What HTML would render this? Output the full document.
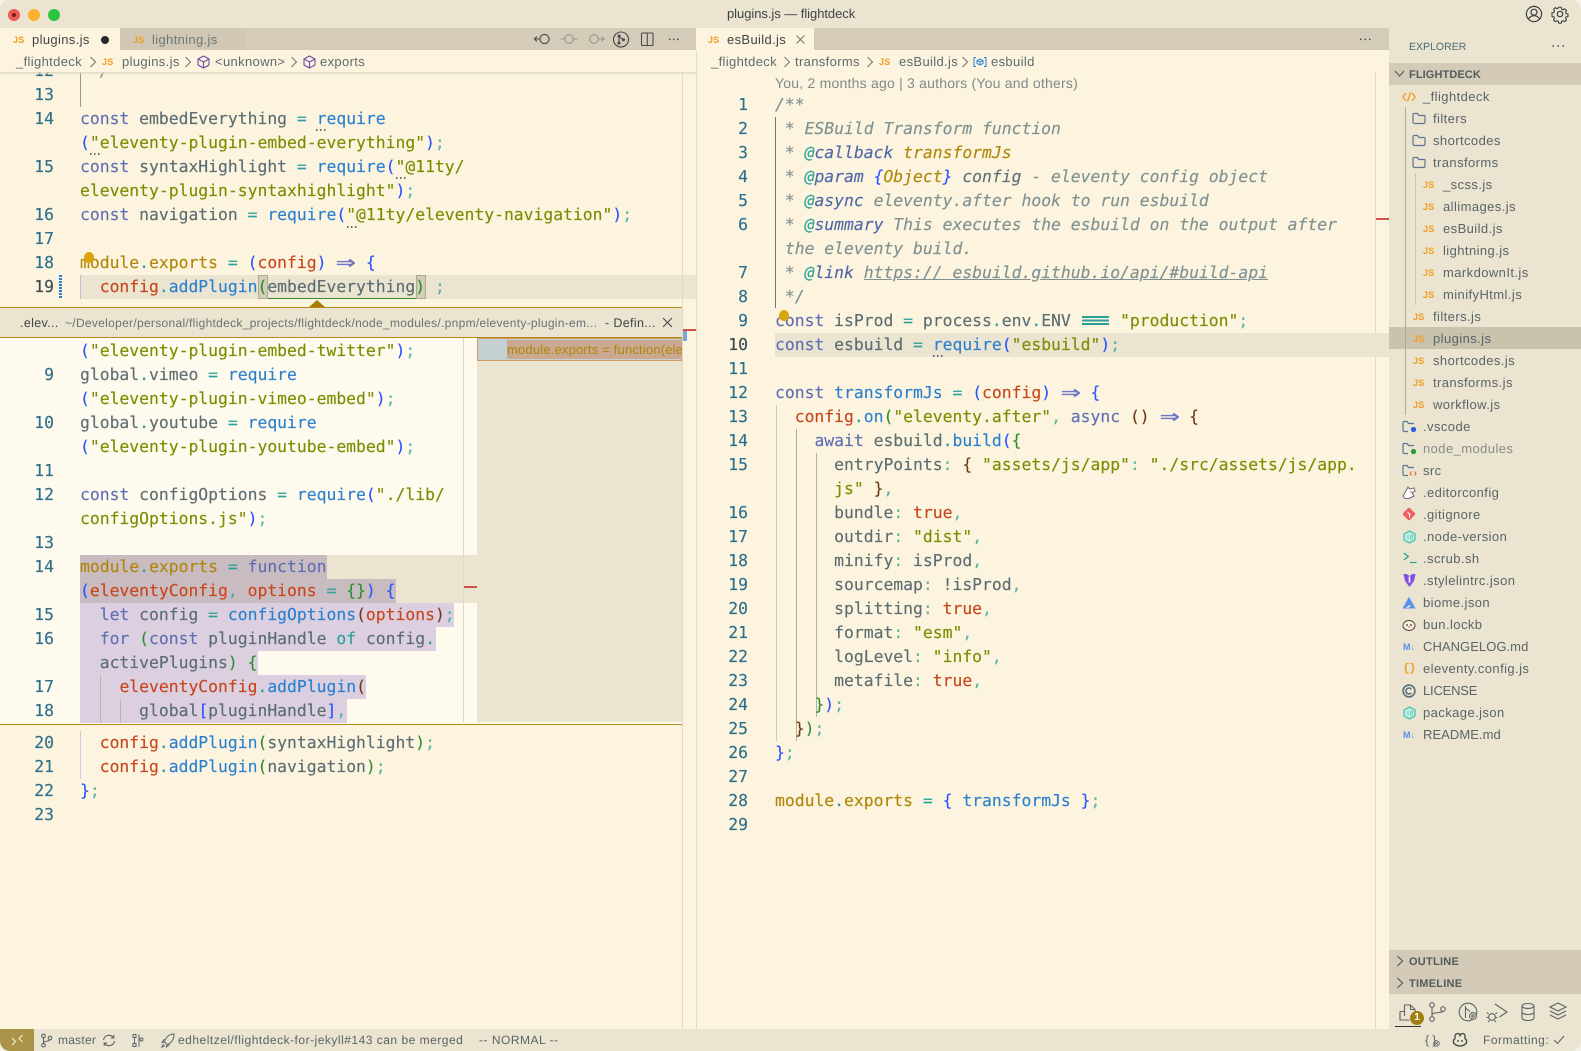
<!DOCTYPE html>
<html lang="en"><head><meta charset="utf-8"><title>plugins.js — flightdeck</title>
<style>
*{box-sizing:border-box}
html,body{margin:0;padding:0;width:1581px;height:1051px;overflow:hidden;background:#f3f0e6}
body{font-family:"Liberation Sans",sans-serif;position:relative}
#w{position:absolute;inset:0;background:#fcf4df;border-radius:10px;overflow:hidden}
.a{position:absolute}
.u{position:absolute;white-space:pre;font-size:13px;letter-spacing:.35px;line-height:22px;height:22px;margin-top:1px;text-rendering:geometricPrecision}
.c,.n{position:absolute;white-space:pre;font:16.39px/24px "DejaVu Sans Mono",monospace;height:24px;margin-top:1px;text-rendering:geometricPrecision;font-variant-ligatures:none;-webkit-text-stroke:.15px}
.c{color:#5b6c72}
.n{text-align:right;width:40px;color:#2e6f8c}
.js{position:absolute;font:bold 9px/12px "Liberation Sans",sans-serif;color:#f29d1f;letter-spacing:.2px;margin-top:1px}
.k{color:#5f6eb3}.v{color:#5b6c72}.o{color:#2aa198}.f{color:#2a80cf}.s{color:#7c8c00}.b{color:#2a55ff}.g{color:#2f8f30}.r{color:#c8451a}.y{color:#b0860a}.m{color:#6d3a1c}.p{color:#2aa198;opacity:.75}
.i{font-style:italic;color:#7f9192}.t{font-style:italic;color:#5f7076}.at{font-style:italic;color:#2aa198}.d{font-style:italic;color:#4f68a8}.ty{font-style:italic;color:#b0860a}.bi{font-style:italic;color:#2a55ff}
.ar{display:inline-block;width:1ch;margin-right:1ch;transform:scale(2,1.45);transform-origin:0 58%;color:#6a72c4;-webkit-text-stroke:.25px #6a72c4}
.eq{display:inline-block;width:calc(3ch - 2px);margin:0 1px;height:9px;color:transparent;background:repeating-linear-gradient(#2aa198 0 2px,transparent 2px 3.5px);line-height:9px;vertical-align:1px;overflow:hidden;-webkit-text-stroke:0}
.dots{position:absolute;width:10px;height:2px;background:repeating-linear-gradient(90deg,#5b6c72 0 1.6px,transparent 1.6px 4px)}
.bc{color:#5e6a6e}
svg{position:absolute;overflow:visible}
.row{color:#5b6468;letter-spacing:.42px}
#side svg,#crumb svg{margin-top:1px}
.st{letter-spacing:.5px;font-size:12px;color:#5b6468;margin-top:0}
</style></head><body><div id="w">

<!-- title bar -->
<div class="a" style="left:0;top:0;width:1581px;height:28px;background:#eae4d0"></div>
<div class="a" style="left:8px;top:9px;width:12px;height:12px;border-radius:50%;background:#ee5a52"></div>
<div class="a" style="left:12px;top:13px;width:4px;height:4px;border-radius:50%;background:#7d1c14"></div>
<div class="a" style="left:28px;top:9px;width:12px;height:12px;border-radius:50%;background:#fdb22e"></div>
<div class="a" style="left:48px;top:9px;width:12px;height:12px;border-radius:50%;background:#2bc640"></div>
<div class="u" style="left:727px;top:2px;color:#3f4547;letter-spacing:-.05px">plugins.js — flightdeck</div>
<svg style="left:1525px;top:5px" width="18" height="18" viewBox="0 0 18 18" fill="none" stroke="#3c3f40" stroke-width="1.2"><circle cx="9" cy="9" r="7.6"/><circle cx="9" cy="7.2" r="3"/><path d="M3.6 14.2c1-2.6 3-3.5 5.4-3.5s4.400.9 5.400 3.500"/></svg>
<svg style="left:1551px;top:5px" width="18" height="18" viewBox="0 0 18 18" fill="none" stroke="#3c3f40" stroke-width="1.2"><path d="M7.600 1.500h2.800l.4 2.100 1.500.7 1.900-1.100 2 2-1.100 1.900.7 1.500 2.100.4v2.800l-2.100.4-.7 1.500 1.100 1.900-2 2-1.900-1.100-1.500.7-.4 2.100H7.600l-.4-2.100-1.500-.7-1.900 1.100-2-2 1.100-1.900-.7-1.500-2.100-.4V7.700l2.100-.4.7-1.500-1.100-1.900 2-2 1.900 1.100 1.500-.7z" transform="translate(.9 .9) scale(.9)"/><circle cx="9" cy="9" r="2.700"/></svg>

<!-- left tabs -->
<div class="a" style="left:0;top:28px;width:696px;height:22px;background:#d4ccb9"></div>
<div class="a" style="left:120px;top:28px;width:126px;height:22px;background:#d0c8b4"></div>
<div class="a" style="left:0;top:28px;width:120px;height:22px;background:#fcf4df"></div>
<div class="js" style="left:13px;top:33px">JS</div>
<div class="u" style="left:32px;top:28px;color:#3f4547">plugins.js</div>
<div class="a" style="left:101px;top:36px;width:8px;height:8px;border-radius:50%;background:#26292a"></div>
<div class="js" style="left:133px;top:33px">JS</div>
<div class="u" style="left:152px;top:28px;color:#6c7678">lightning.js</div>
<svg style="left:534px;top:30px" width="160" height="18" viewBox="0 0 160 18" fill="none" stroke="#454a4b" stroke-width="1.100">
<circle cx="10.500" cy="9" r="4.600"/><path d="M5.900 9H.500M3 6.500.500 9 3 11.500"/>
<g stroke="#97968a"><circle cx="35" cy="9" r="4.300"/><path d="M26.500 9h4.200M39.300 9h4.200"/><circle cx="60" cy="9" r="4.300"/><path d="M64.300 9h5.500M67.500 6.500 70 9l-2.500 2.500"/></g>
<circle cx="87" cy="9.500" r="7.500"/><path d="M85 5v9M85 6.500l3.500 2.800"/><circle cx="85" cy="6" r="1" fill="#454a4b"/><circle cx="85" cy="13" r="1" fill="#454a4b"/><circle cx="89.500" cy="9.800" r="1" fill="#454a4b"/>
<rect x="107.500" y="3" width="11.500" height="12.500" rx="1"/><path d="M113.300 3v12.500"/>
<path d="M135 9.400h1.500M139 9.400h1.500M143 9.400h1.500" stroke-width="1.500"/></svg>

<!-- right tabs -->
<div class="a" style="left:696px;top:28px;width:693px;height:22px;background:#d4ccb9"></div>
<div class="a" style="left:696px;top:28px;width:118px;height:22px;background:#fcf4df"></div>
<div class="js" style="left:708px;top:33px">JS</div>
<div class="u" style="left:727px;top:28px;color:#3f4547">esBuild.js</div>
<svg style="left:795px;top:34px" width="12" height="12" fill="none" stroke="#6f7475" stroke-width="1"><path d="M1.500 1.500l8 8M9.500 1.500l-8 8"/></svg>
<svg style="left:1359px;top:30px" width="20" height="18" fill="none" stroke="#454a4b" stroke-width="1.500"><path d="M1 9.400h1.500M5.500 9.400H7M10 9.400h1.500"/></svg>

<!-- breadcrumbs -->
<div class="a" style="left:0;top:50px;width:696px;height:22px;background:#fcf4df"></div>
<div id="crumb">
<div class="u bc" style="left:16px;top:50px">_flightdeck</div>
<svg style="left:89px;top:55px" width="8" height="12" fill="none" stroke="#6f7475"><path d="M1.500 1l5 5-5 5"/></svg>
<div class="js" style="left:102px;top:55px">JS</div>
<div class="u bc" style="left:122px;top:50px">plugins.js</div>
<svg style="left:184px;top:55px" width="8" height="12" fill="none" stroke="#6f7475"><path d="M1.500 1l5 5-5 5"/></svg>
<svg style="left:197px;top:54px" width="13" height="14" fill="none" stroke="#6a4fa3" stroke-width="1.100"><path d="M6.500 1l5.500 3v6l-5.500 3L1 10V4zM1 4l5.500 3L12 4M6.500 7v6"/></svg>
<div class="u bc" style="left:215px;top:50px">&lt;unknown&gt;</div>
<svg style="left:290px;top:55px" width="8" height="12" fill="none" stroke="#6f7475"><path d="M1.500 1l5 5-5 5"/></svg>
<svg style="left:303px;top:54px" width="13" height="14" fill="none" stroke="#6a4fa3" stroke-width="1.100"><path d="M6.500 1l5.500 3v6l-5.500 3L1 10V4zM1 4l5.500 3L12 4M6.500 7v6"/></svg>
<div class="u bc" style="left:320px;top:50px">exports</div>

<div class="u bc" style="left:711px;top:50px">_flightdeck</div>
<svg style="left:783px;top:55px" width="8" height="12" fill="none" stroke="#6f7475"><path d="M1.500 1l5 5-5 5"/></svg>
<div class="u bc" style="left:795px;top:50px">transforms</div>
<svg style="left:866px;top:55px" width="8" height="12" fill="none" stroke="#6f7475"><path d="M1.500 1l5 5-5 5"/></svg>
<div class="js" style="left:879px;top:55px">JS</div>
<div class="u bc" style="left:899px;top:50px">esBuild.js</div>
<svg style="left:961px;top:55px" width="8" height="12" fill="none" stroke="#6f7475"><path d="M1.500 1l5 5-5 5"/></svg>
<svg style="left:973px;top:55px" width="14" height="12" fill="none" stroke="#2a80cf" stroke-width="1"><path d="M3 1.500H1v9h2M11 1.500h2v9h-2"/><path d="M7 3l3 1.500v3L7 9 4 7.500v-3zM4 4.500l3 1.500 3-1.500M7 6v3"/></svg>
<div class="u bc" style="left:991px;top:50px">esbuild</div>
</div>

<!-- left editor top -->
<div class="a" id="le" style="left:0;top:72px;width:696px;height:235px;overflow:hidden">
 <div class="a" style="left:80px;top:0;width:1px;height:35px;background:#9a9a8c"></div>
 <div class="n" style="left:14px;top:-14px">12</div><div class="c i" style="left:80px;top:-14px"> */</div>
 <div class="n" style="left:14px;top:10px">13</div>
 <div class="n" style="left:14px;top:34px">14</div><div class="c" style="left:80px;top:34px"><span class="k">const</span> embedEverything <span class="o">=</span> <span class="f">require</span></div>
 <div class="c" style="left:80px;top:58px"><span class="b">(</span><span class="s">"eleventy-plugin-embed-everything"</span><span class="b">)</span><span class="p">;</span></div>
 <div class="n" style="left:14px;top:82px">15</div><div class="c" style="left:80px;top:82px"><span class="k">const</span> syntaxHighlight <span class="o">=</span> <span class="f">require</span><span class="b">(</span><span class="s">"@11ty/</span></div>
 <div class="c" style="left:80px;top:106px"><span class="s">eleventy-plugin-syntaxhighlight"</span><span class="b">)</span><span class="p">;</span></div>
 <div class="n" style="left:14px;top:130px">16</div><div class="c" style="left:80px;top:130px"><span class="k">const</span> navigation <span class="o">=</span> <span class="f">require</span><span class="b">(</span><span class="s">"@11ty/eleventy-navigation"</span><span class="b">)</span><span class="p">;</span></div>
 <div class="n" style="left:14px;top:154px">17</div>
 <div class="n" style="left:14px;top:178px">18</div><div class="c" style="left:80px;top:178px"><span class="y">module</span><span class="o">.</span><span class="y">exports</span> <span class="o">=</span> <span class="b">(</span><span class="r">config</span><span class="b">)</span> <span class="ar">⇒</span> <span class="b">{</span></div>
 <div class="a" style="left:80px;top:203px;width:616px;height:24px;background:#eae4d0"></div>
 <div class="a" style="left:59px;top:203px;width:3px;height:23px;background:repeating-linear-gradient(#2a80cf 0 2px,#fcf4df 2px 3px)"></div>
 <div class="a" style="left:80px;top:203px;width:1px;height:24px;background:#b6c2d6"></div>
 <div class="a" style="left:258px;top:203px;width:10px;height:24px;background:#d2cfb6;border:1px solid #aaa99a"></div>
 <div class="a" style="left:416px;top:203px;width:10px;height:24px;background:#d2cfb6;border:1px solid #aaa99a"></div>
 <div class="a" style="left:268px;top:226px;width:148px;height:1px;background:#2f8f30"></div>
 <div class="n" style="left:14px;top:202px;color:#3c4a50">19</div><div class="c" style="left:80px;top:202px">  <span class="r">config</span><span class="o">.</span><span class="f">addPlugin</span><span class="g">(</span>embedEverything<span class="g">)</span> <span class="p">;</span></div>
</div>
<div class="dots" style="left:316px;top:129px"></div>
<div class="dots" style="left:90px;top:153px"></div>
<div class="dots" style="left:396px;top:177px"></div>
<div class="dots" style="left:347px;top:226px"></div>
<div class="a" style="left:84px;top:252px;width:10px;height:11px;border-radius:50% 50% 45% 45%;background:#d9a50f"></div>
<div class="a" style="left:0;top:72px;width:696px;height:3px;background:linear-gradient(#ddd7c3,rgba(221,215,195,0))"></div>

<!-- rulers of left pane -->
<div class="a" style="left:682px;top:72px;width:1px;height:957px;background:#dfd9c6"></div>
<div class="a" style="left:696px;top:50px;width:1px;height:979px;background:#e4decb"></div>
<div class="a" style="left:683px;top:329px;width:13px;height:2px;background:#d0524a"></div>
<div class="a" style="left:683px;top:331px;width:4px;height:10px;background:#7aa7d2"></div>

<!-- peek widget -->
<div class="a" style="left:309px;top:300px;width:0;height:0;border-left:8px solid transparent;border-right:8px solid transparent;border-bottom:7px solid #a87c00"></div>
<div class="a" style="left:0;top:307px;width:682px;height:31px;background:#eae4d0;border-top:1px solid #b5891a;border-bottom:1px solid #b5891a"></div>
<div class="u" style="left:20px;top:311px;color:#3f4547;font-size:12.500px">.elev...</div>
<div class="u" style="left:65px;top:311px;color:#6a7274;font-size:12px;letter-spacing:.3px">~/Developer/personal/flightdeck_projects/flightdeck/node_modules/.pnpm/eleventy-plugin-em...</div>
<div class="u" style="left:605px;top:311px;color:#3f4547;font-size:12.500px">- Defin...</div>
<svg style="left:662px;top:317px" width="11" height="11" fill="none" stroke="#454a4b" stroke-width="1.100"><path d="M1 1l9 9M10 1l-9 9"/></svg>

<div class="a" id="pk" style="left:0;top:338px;width:682px;height:387px;background:#fffaee;overflow:hidden;border-bottom:1px solid #b5891a">
 <div class="a" style="left:80px;top:217px;width:397px;height:48px;background:#eae4d0"></div>
 <div class="a" style="left:80px;top:217px;width:247px;height:24px;background:#c9bcc0"></div>
 <div class="a" style="left:80px;top:241px;width:316px;height:24px;background:#c9bcc0"></div>
 <div class="a" style="left:80px;top:265px;width:374px;height:24px;background:#dbcfe0"></div>
 <div class="a" style="left:80px;top:289px;width:356px;height:24px;background:#dbcfe0"></div>
 <div class="a" style="left:80px;top:313px;width:178px;height:24px;background:#dbcfe0"></div>
 <div class="a" style="left:80px;top:337px;width:286px;height:24px;background:#dbcfe0"></div>
 <div class="a" style="left:80px;top:361px;width:267px;height:24px;background:#dbcfe0"></div>
 <div class="a" style="left:100px;top:337px;width:1px;height:48px;background:#c0aeb8"></div>
 <div class="a" style="left:120px;top:361px;width:1px;height:24px;background:#c0aeb8"></div>
 <div class="a" style="left:463px;top:0;width:1px;height:384px;background:#ded9c8"></div>
 <div class="a" style="left:477px;top:0;width:205px;height:384px;background:#eae4d0"></div>
 <div class="a" style="left:477px;top:0;width:205px;height:23px;background:#c5d0d2;border:1px solid #cf9a62"></div>
 <div class="a" style="left:507px;top:2px;width:175px;height:19px;background:#cba890"></div>
 <div class="u" style="left:507px;top:0;font-size:13px;letter-spacing:.18px;color:#b0860a;width:175px;overflow:hidden">module.exports = function(eleventyConfig</div>
 <div class="a" style="left:464px;top:248px;width:13px;height:2px;background:#d0524a"></div>

 <div class="c" style="left:80px;top:0"><span class="b">(</span><span class="s">"eleventy-plugin-embed-twitter"</span><span class="b">)</span><span class="p">;</span></div>
 <div class="n" style="left:14px;top:24px">9</div><div class="c" style="left:80px;top:24px">global<span class="o">.</span>vimeo <span class="o">=</span> <span class="f">require</span></div>
 <div class="c" style="left:80px;top:48px"><span class="b">(</span><span class="s">"eleventy-plugin-vimeo-embed"</span><span class="b">)</span><span class="p">;</span></div>
 <div class="n" style="left:14px;top:72px">10</div><div class="c" style="left:80px;top:72px">global<span class="o">.</span>youtube <span class="o">=</span> <span class="f">require</span></div>
 <div class="c" style="left:80px;top:96px"><span class="b">(</span><span class="s">"eleventy-plugin-youtube-embed"</span><span class="b">)</span><span class="p">;</span></div>
 <div class="n" style="left:14px;top:120px">11</div>
 <div class="n" style="left:14px;top:144px">12</div><div class="c" style="left:80px;top:144px"><span class="k">const</span> configOptions <span class="o">=</span> <span class="f">require</span><span class="b">(</span><span class="s">"./lib/</span></div>
 <div class="c" style="left:80px;top:168px"><span class="s">configOptions.js"</span><span class="b">)</span><span class="p">;</span></div>
 <div class="n" style="left:14px;top:192px">13</div>
 <div class="n" style="left:14px;top:216px">14</div><div class="c" style="left:80px;top:216px"><span class="y">module</span><span class="o">.</span><span class="y">exports</span> <span class="o">=</span> <span class="k">function</span></div>
 <div class="c" style="left:80px;top:240px"><span class="b">(</span><span class="r">eleventyConfig</span><span class="p">,</span> <span class="r">options</span> <span class="o">=</span> <span class="g">{}</span><span class="b">)</span> <span class="b">{</span></div>
 <div class="n" style="left:14px;top:264px">15</div><div class="c" style="left:80px;top:264px">  <span class="k">let</span> config <span class="o">=</span> <span class="f">configOptions</span><span class="m">(</span><span class="r">options</span><span class="m">)</span><span class="p">;</span></div>
 <div class="n" style="left:14px;top:288px">16</div><div class="c" style="left:80px;top:288px">  <span class="k">for</span> <span class="g">(</span><span class="k">const</span> pluginHandle <span class="o">of</span> config<span class="o">.</span></div>
 <div class="c" style="left:80px;top:312px">  activePlugins<span class="g">) {</span></div>
 <div class="n" style="left:14px;top:336px">17</div><div class="c" style="left:80px;top:336px">    <span class="r">eleventyConfig</span><span class="o">.</span><span class="f">addPlugin</span><span class="m">(</span></div>
 <div class="n" style="left:14px;top:360px">18</div><div class="c" style="left:80px;top:360px">      global<span class="b">[</span>pluginHandle<span class="b">]</span><span class="p">,</span></div>
</div>

<!-- left editor bottom -->
<div class="a" style="left:80px;top:731px;width:1px;height:48px;background:#c5cfdf"></div>
<div class="n" style="left:14px;top:730px">20</div><div class="c" style="left:80px;top:730px">  <span class="r">config</span><span class="o">.</span><span class="f">addPlugin</span><span class="g">(</span>syntaxHighlight<span class="g">)</span><span class="p">;</span></div>
<div class="n" style="left:14px;top:754px">21</div><div class="c" style="left:80px;top:754px">  <span class="r">config</span><span class="o">.</span><span class="f">addPlugin</span><span class="g">(</span>navigation<span class="g">)</span><span class="p">;</span></div>
<div class="n" style="left:14px;top:778px">22</div><div class="c" style="left:80px;top:778px"><span class="b">}</span><span class="p">;</span></div>
<div class="n" style="left:14px;top:802px">23</div>

<!-- right editor -->
<div class="a" style="left:1375px;top:72px;width:1px;height:957px;background:#dfd9c6"></div>
<div class="a" style="left:775px;top:333px;width:614px;height:24px;background:#eae4d0"></div>
<div class="a" style="left:1376px;top:218px;width:13px;height:2px;background:#d0524a"></div>
<div class="a" style="left:775px;top:117px;width:1px;height:191px;background:#76766a"></div>
<div class="a" style="left:775.500px;top:405px;width:1px;height:336px;background:#c5c8d8"></div>
<div class="a" style="left:795.500px;top:429px;width:1px;height:312px;background:#b3ae90"></div>
<div class="a" style="left:815.500px;top:453px;width:1px;height:264px;background:#a8b8a8"></div>
<div class="u" style="left:775px;top:71px;font-size:14px;letter-spacing:.22px;color:#7f8a8a">You, 2 months ago | 3 authors (You and others)</div>

<div class="n" style="left:708px;top:92px">1</div><div class="c i" style="left:775px;top:92px">/**</div>
<div class="n" style="left:708px;top:116px">2</div><div class="c i" style="left:775px;top:116px"> * ESBuild Transform function</div>
<div class="n" style="left:708px;top:140px">3</div><div class="c i" style="left:775px;top:140px"> * <span class="at">@</span><span class="d">callback</span> <span class="ty">transformJs</span></div>
<div class="n" style="left:708px;top:164px">4</div><div class="c i" style="left:775px;top:164px"> * <span class="at">@</span><span class="d">param</span> <span class="bi">{</span><span class="ty">Object</span><span class="bi">}</span> <span class="t">config</span> - eleventy config object</div>
<div class="n" style="left:708px;top:188px">5</div><div class="c i" style="left:775px;top:188px"> * <span class="at">@</span><span class="d">async</span> eleventy.after hook to run esbuild</div>
<div class="n" style="left:708px;top:212px">6</div><div class="c i" style="left:775px;top:212px"> * <span class="at">@</span><span class="d">summary</span> This executes the esbuild on the output after</div>
<div class="c i" style="left:775px;top:236px"> the eleventy build.</div>
<div class="n" style="left:708px;top:260px">7</div><div class="c i" style="left:775px;top:260px"> * <span class="at">@</span><span class="d">link</span> <span style="text-decoration:underline">https:// esbuild.github.io/api/#build-api</span></div>
<div class="n" style="left:708px;top:284px">8</div><div class="c i" style="left:775px;top:284px"> */</div>
<div class="n" style="left:708px;top:308px">9</div><div class="c" style="left:775px;top:308px"><span class="k">const</span> isProd <span class="o">=</span> process<span class="o">.</span>env<span class="o">.</span>ENV <span class="eq">===</span> <span class="s">"production"</span><span class="p">;</span></div>
<div class="n" style="left:708px;top:332px;color:#3c4a50">10</div><div class="c" style="left:775px;top:332px"><span class="k">const</span> esbuild <span class="o">=</span> <span class="f">require</span><span class="b">(</span><span class="s">"esbuild"</span><span class="b">)</span><span class="p">;</span></div>
<div class="n" style="left:708px;top:356px">11</div>
<div class="n" style="left:708px;top:380px">12</div><div class="c" style="left:775px;top:380px"><span class="k">const</span> <span class="f">transformJs</span> <span class="o">=</span> <span class="b">(</span><span class="r">config</span><span class="b">)</span> <span class="ar">⇒</span> <span class="b">{</span></div>
<div class="n" style="left:708px;top:404px">13</div><div class="c" style="left:775px;top:404px">  <span class="r">config</span><span class="o">.</span><span class="f">on</span><span class="g">(</span><span class="s">"eleventy.after"</span><span class="p">,</span> <span class="k">async</span> <span class="m">()</span> <span class="ar">⇒</span> <span class="m">{</span></div>
<div class="n" style="left:708px;top:428px">14</div><div class="c" style="left:775px;top:428px">    <span class="k">await</span> esbuild<span class="o">.</span><span class="f">build</span><span class="b">(</span><span class="g">{</span></div>
<div class="n" style="left:708px;top:452px">15</div><div class="c" style="left:775px;top:452px">      entryPoints<span class="p">:</span> <span class="m">{</span> <span class="s">"assets/js/app"</span><span class="p">:</span> <span class="s">"./src/assets/js/app.</span></div>
<div class="c" style="left:775px;top:476px">      <span class="s">js"</span> <span class="m">}</span><span class="p">,</span></div>
<div class="n" style="left:708px;top:500px">16</div><div class="c" style="left:775px;top:500px">      bundle<span class="p">:</span> <span class="r">true</span><span class="p">,</span></div>
<div class="n" style="left:708px;top:524px">17</div><div class="c" style="left:775px;top:524px">      outdir<span class="p">:</span> <span class="s">"dist"</span><span class="p">,</span></div>
<div class="n" style="left:708px;top:548px">18</div><div class="c" style="left:775px;top:548px">      minify<span class="p">:</span> isProd<span class="p">,</span></div>
<div class="n" style="left:708px;top:572px">19</div><div class="c" style="left:775px;top:572px">      sourcemap<span class="p">:</span> !isProd<span class="p">,</span></div>
<div class="n" style="left:708px;top:596px">20</div><div class="c" style="left:775px;top:596px">      splitting<span class="p">:</span> <span class="r">true</span><span class="p">,</span></div>
<div class="n" style="left:708px;top:620px">21</div><div class="c" style="left:775px;top:620px">      format<span class="p">:</span> <span class="s">"esm"</span><span class="p">,</span></div>
<div class="n" style="left:708px;top:644px">22</div><div class="c" style="left:775px;top:644px">      logLevel<span class="p">:</span> <span class="s">"info"</span><span class="p">,</span></div>
<div class="n" style="left:708px;top:668px">23</div><div class="c" style="left:775px;top:668px">      metafile<span class="p">:</span> <span class="r">true</span><span class="p">,</span></div>
<div class="n" style="left:708px;top:692px">24</div><div class="c" style="left:775px;top:692px">    <span class="g">}</span><span class="b">)</span><span class="p">;</span></div>
<div class="n" style="left:708px;top:716px">25</div><div class="c" style="left:775px;top:716px">  <span class="m">}</span><span class="g">)</span><span class="p">;</span></div>
<div class="n" style="left:708px;top:740px">26</div><div class="c" style="left:775px;top:740px"><span class="b">}</span><span class="p">;</span></div>
<div class="n" style="left:708px;top:764px">27</div>
<div class="n" style="left:708px;top:788px">28</div><div class="c" style="left:775px;top:788px"><span class="y">module</span><span class="o">.</span><span class="y">exports</span> <span class="o">=</span> <span class="b">{</span> <span class="f">transformJs</span> <span class="b">}</span><span class="p">;</span></div>
<div class="n" style="left:708px;top:812px">29</div>
<div class="dots" style="left:933px;top:355px"></div>
<div class="a" style="left:779px;top:310px;width:10px;height:11px;border-radius:50% 50% 45% 45%;background:#d9a50f"></div>

<!-- sidebar -->
<div class="a" style="left:1389px;top:28px;width:192px;height:1001px;background:#eae4d0"></div>
<div class="u" style="left:1409px;top:35px;font-size:10.500px;letter-spacing:.02px;color:#4e6a73">EXPLORER</div>
<svg style="left:1551px;top:37px" width="16" height="18" fill="none" stroke="#454a4b" stroke-width="1.500"><path d="M1.500 9h1.500M6.500 9H8M11.500 9H13"/></svg>
<div class="a" style="left:1389px;top:63px;width:192px;height:22px;background:#d3cbb8"></div>
<svg style="left:1394px;top:70px" width="11" height="8" fill="none" stroke="#555" stroke-width="1.100"><path d="M1 1l4.500 5L10 1"/></svg>
<div class="u" style="left:1409px;top:63px;font-size:11px;font-weight:bold;letter-spacing:.1px;color:#555b5c">FLIGHTDECK</div>
<div class="a" style="left:1389px;top:327px;width:192px;height:22px;background:#c9c2ac"></div>
<div class="a" style="left:1405px;top:107px;width:1px;height:308px;background:#aeaa9c"></div>
<div class="a" style="left:1415px;top:173px;width:1px;height:132px;background:#ccc6b2"></div>

<div id="side">
<svg style="left:1402px;top:90px" width="14" height="12" fill="none" stroke="#f29d1f" stroke-width="1.300"><path d="M4 2L.800 6 4 10M10 2l3.200 4L10 10M8.500 1.500l-3 9"/></svg>
<div class="u row" style="left:1423px;top:85px">_flightdeck</div>
<svg style="left:1412px;top:111px" width="14" height="13" fill="none" stroke="#5c7590" stroke-width="1.200"><path d="M1 2.500a1 1 0 011-1h3.500l1.500 2h5a1 1 0 011 1V10a1.500 1.500 0 01-1.500 1.500h-9A1.500 1.500 0 011 10z"/></svg>
<div class="u row" style="left:1433px;top:107px">filters</div>
<svg style="left:1412px;top:133px" width="14" height="13" fill="none" stroke="#5c7590" stroke-width="1.200"><path d="M1 2.500a1 1 0 011-1h3.500l1.500 2h5a1 1 0 011 1V10a1.500 1.500 0 01-1.500 1.500h-9A1.500 1.500 0 011 10z"/></svg>
<div class="u row" style="left:1433px;top:129px">shortcodes</div>
<svg style="left:1412px;top:155px" width="14" height="13" fill="none" stroke="#5c7590" stroke-width="1.200"><path d="M1 2.500a1 1 0 011-1h3.500l1.500 2h5a1 1 0 011 1V10a1.500 1.500 0 01-1.500 1.500h-9A1.500 1.500 0 011 10z"/></svg>
<div class="u row" style="left:1433px;top:151px">transforms</div>
<div class="js" style="left:1423px;top:178px">JS</div><div class="u row" style="left:1443px;top:173px">_scss.js</div>
<div class="js" style="left:1423px;top:200px">JS</div><div class="u row" style="left:1443px;top:195px">allimages.js</div>
<div class="js" style="left:1423px;top:222px">JS</div><div class="u row" style="left:1443px;top:217px">esBuild.js</div>
<div class="js" style="left:1423px;top:244px">JS</div><div class="u row" style="left:1443px;top:239px">lightning.js</div>
<div class="js" style="left:1423px;top:266px">JS</div><div class="u row" style="left:1443px;top:261px">markdownIt.js</div>
<div class="js" style="left:1423px;top:288px">JS</div><div class="u row" style="left:1443px;top:283px">minifyHtml.js</div>
<div class="js" style="left:1413px;top:310px">JS</div><div class="u row" style="left:1433px;top:305px">filters.js</div>
<div class="js" style="left:1413px;top:332px">JS</div><div class="u row" style="left:1433px;top:327px">plugins.js</div>
<div class="js" style="left:1413px;top:354px">JS</div><div class="u row" style="left:1433px;top:349px">shortcodes.js</div>
<div class="js" style="left:1413px;top:376px">JS</div><div class="u row" style="left:1433px;top:371px">transforms.js</div>
<div class="js" style="left:1413px;top:398px">JS</div><div class="u row" style="left:1433px;top:393px">workflow.js</div>

<svg style="left:1402px;top:419px" width="15" height="14" fill="none" stroke="#5c7590" stroke-width="1.200"><path d="M6 11.500H2.500A1.500 1.500 0 011 10V2.500a1 1 0 011-1h3l1.500 2H12"/><circle cx="11.500" cy="9.500" r="2.600" fill="#2a5fe0" stroke="none"/></svg>
<div class="u row" style="left:1423px;top:415px">.vscode</div>
<svg style="left:1402px;top:441px" width="15" height="14" fill="none" stroke="#5c7590" stroke-width="1.200"><path d="M6 11.500H2.500A1.500 1.500 0 011 10V2.500a1 1 0 011-1h3l1.500 2H12"/><circle cx="11.500" cy="9.500" r="2.600" fill="#2a9a40" stroke="none"/></svg>
<div class="u" style="left:1423px;top:437px;color:#878c88;letter-spacing:.42px">node_modules</div>
<svg style="left:1402px;top:463px" width="15" height="14" fill="none" stroke="#5c7590" stroke-width="1.200"><path d="M6 11.500H2.500A1.500 1.500 0 011 10V2.500a1 1 0 011-1h3l1.500 2H12"/><path d="M9.500 7.500 8 9.500l1.500 2M12.500 7.500l1.500 2-1.500 2" stroke="#e0562a" stroke-width="1"/></svg>
<div class="u row" style="left:1423px;top:459px">src</div>
<svg style="left:1402px;top:485px" width="14" height="14"><path d="M1 10l3-5 2-4 1.500 2L12 2l1 3-3 2 2 3-5 2.500H3z" fill="#fff" stroke="#6a6a72"/><circle cx="9" cy="6" r="1.300" fill="#e8b0b8"/></svg>
<div class="u row" style="left:1423px;top:481px">.editorconfig</div>
<svg style="left:1402px;top:506px" width="14" height="14"><rect x="2.200" y="2.200" width="9.600" height="9.600" rx="1.500" transform="rotate(45 7 7)" fill="#ee5e5e"/><path d="M5.500 5 8.500 8M7.500 7v3.500" stroke="#fff" stroke-width=".9" fill="none"/></svg>
<div class="u row" style="left:1423px;top:503px">.gitignore</div>
<svg style="left:1403px;top:529px" width="13" height="14" fill="#c3efe2" stroke="#4fc7ad" stroke-width="1.300"><path d="M6.500 1 12 4v6l-5.500 3L1 10V4z"/><path d="M5 5v4M7.500 5h2v2h-2v2h2" fill="none" stroke-width=".8"/></svg>
<div class="u row" style="left:1423px;top:525px">.node-version</div>
<svg style="left:1403px;top:551px" width="14" height="12" fill="none" stroke="#2aa198" stroke-width="1.300"><path d="M.800 1l4.500 3.500L.800 8M7 10.500h6.500"/></svg>
<div class="u row" style="left:1423px;top:547px">.scrub.sh</div>
<svg style="left:1403px;top:572px" width="13" height="14"><path d="M.500 1h3L6.500 3 9.500 1h3L11 8l-4.500 6L2 8z" fill="#8150e0"/><path d="M6.500 3.500v6" stroke="#fff" stroke-width="1.600"/></svg>
<div class="u row" style="left:1423px;top:569px">.stylelintrc.json</div>
<svg style="left:1402px;top:595px" width="14" height="14"><path d="M7 .800 13.500 12.500H.500z" fill="#5b8ff0"/><path d="M4 12l3-3 2 1-3 2z" fill="#eae4d0"/></svg>
<div class="u row" style="left:1423px;top:591px">biome.json</div>
<svg style="left:1402px;top:617px" width="14" height="14"><ellipse cx="7" cy="7.500" rx="6" ry="5" fill="#faeedd" stroke="#5a4a40" stroke-width="1"/><circle cx="5" cy="7" r=".9" fill="#333"/><circle cx="9" cy="7" r=".9" fill="#333"/><path d="M6 8.500h2v1H6z" fill="#d65"/></svg>
<div class="u row" style="left:1423px;top:613px">bun.lockb</div>
<div class="a" style="left:1403px;top:641px;font:bold 9px/12px 'Liberation Sans',sans-serif;color:#5b8ff0">M↓</div>
<div class="u row" style="left:1423px;top:635px;letter-spacing:.05px">CHANGELOG.md</div>
<div class="a" style="left:1403px;top:661px;font:bold 11px/16px 'Liberation Mono',monospace;color:#f29d1f;letter-spacing:-.5px">{}</div>
<div class="u row" style="left:1423px;top:657px">eleventy.config.js</div>
<svg style="left:1402px;top:683px" width="14" height="14" fill="none" stroke="#5a7180" stroke-width="1.600"><circle cx="7" cy="7" r="5.900"/><path d="M9.300 5.200a3 3 0 100 3.600"/></svg>
<div class="u row" style="left:1423px;top:679px;letter-spacing:-.2px">LICENSE</div>
<svg style="left:1403px;top:705px" width="13" height="14" fill="#c3efe2" stroke="#4fc7ad" stroke-width="1.300"><path d="M6.500 1 12 4v6l-5.500 3L1 10V4z"/><path d="M5 5v4M7.500 5h2v2h-2v2h2" fill="none" stroke-width=".8"/></svg>
<div class="u row" style="left:1423px;top:701px">package.json</div>
<div class="a" style="left:1403px;top:729px;font:bold 9px/12px 'Liberation Sans',sans-serif;color:#5b8ff0">M↓</div>
<div class="u row" style="left:1423px;top:723px;letter-spacing:.05px">README.md</div>
</div>

<div class="a" style="left:1389px;top:950px;width:192px;height:44px;background:#d3cbb8"></div>
<svg style="left:1396px;top:955px" width="8" height="12" fill="none" stroke="#555" stroke-width="1.100"><path d="M1.500 1l5 5-5 5"/></svg>
<svg style="left:1396px;top:977px" width="8" height="12" fill="none" stroke="#555" stroke-width="1.100"><path d="M1.500 1l5 5-5 5"/></svg>
<div class="u" style="left:1409px;top:950px;font-size:11px;font-weight:bold;letter-spacing:.25px;color:#555b5c">OUTLINE</div>
<div class="u" style="left:1409px;top:972px;font-size:11px;font-weight:bold;letter-spacing:.25px;color:#555b5c">TIMELINE</div>

<!-- activity bar -->
<svg style="left:1395px;top:998px" width="180" height="30" fill="none" stroke="#5b6468" stroke-width="1.100">
<path d="M5 13.500V22h9.500M5 13.500h4.500V7h6l4.500 4.500V16"/><path d="M15.500 7v4.500H20M9.500 13.500V18"/>
<path d="M0 28.500h26" stroke="#333" stroke-width="1"/>
<circle cx="37" cy="7" r="2.300"/><circle cx="37" cy="21" r="2.300"/><circle cx="48" cy="11" r="2.300"/><path d="M37 9.300v9.400M37 17c0-3 8.500-1.500 11-3.700"/>
<circle cx="73" cy="14" r="8.800"/><path d="M70.500 8v12M70.500 10l4.500 3.500"/><circle cx="78" cy="18" r="3.400" fill="#eae4d0"/><circle cx="78" cy="18" r="1.200"/>
<path d="M100 6l12 8-7.500 5"/><circle cx="97" cy="19" r="3.300"/><path d="M93.500 16l-1.500-1.500M100.500 16l1.500-1.500M93.500 19.500h-2M100.500 19.500h2M94.500 22.500l-1.500 1.500M99.500 22.500l1.500 1.500"/>
<ellipse cx="133" cy="8" rx="6" ry="2.500"/><path d="M127 8v12c0 1.400 2.700 2.500 6 2.500s6-1.100 6-2.500V8M127 14c0 1.400 2.700 2.500 6 2.500s6-1.100 6-2.500"/>
<path d="M163 5l8 4-8 4-8-4zM155 13l8 4 8-4M155 17l8 4 8-4"/></svg>
<div class="a" style="left:1410px;top:1011px;width:14px;height:14px;border-radius:50%;background:#a07f10;color:#fff;font:bold 10px/14px 'Liberation Sans',sans-serif;text-align:center">1</div>

<!-- status bar -->
<div class="a" style="left:0;top:1029px;width:1581px;height:22px;background:#eae4d0"></div>
<div class="a" style="left:0;top:1029px;width:34px;height:22px;background:#a89348"></div>
<svg style="left:11px;top:1034px" width="13" height="12" fill="none" stroke="#f7f1dc" stroke-width="1.100"><path d="M1 4l3.500 3.500L1 11M11.500 1 8 4.500 11.500 8"/></svg>
<svg style="left:40px;top:1033px" width="13" height="15" fill="none" stroke="#5b6468" stroke-width="1.100"><circle cx="3.500" cy="2.800" r="1.800"/><circle cx="3.500" cy="12.200" r="1.800"/><circle cx="10" cy="5" r="1.800"/><path d="M3.500 4.600v5.800M3.500 9.500C3.500 8 10 8.500 10 6.800"/></svg>
<div class="u st" style="left:58px;top:1029px;letter-spacing:.25px">master</div>
<svg style="left:102px;top:1034px" width="14" height="13" fill="none" stroke="#5b6468" stroke-width="1.100"><path d="M1.500 6a5.500 5.500 0 019.800-2.500M12.500 7a5.500 5.500 0 01-9.800 2.500M11.800 1v3h-3M2.200 12V9h3"/></svg>
<svg style="left:131px;top:1033px" width="13" height="15" fill="none" stroke="#5b6468" stroke-width="1"><path d="M2 1.500h3v3H2zM2 10.500h3v3H2zM3.500 4.500v6M8 1.500v12"/><circle cx="10.500" cy="6.500" r="1.500"/></svg>
<svg style="left:161px;top:1033px" width="14" height="15" fill="none" stroke="#5b6468" stroke-width="1"><path d="M13 1C8 1 4.500 4.500 3.500 9l2.500 2.500C10.500 10.500 13 6 13 1zM3.500 9 1 9.500 3.500 6M6 11.500 5.500 14l3-2.500M2.500 11l-1.500 3 3-1.500"/></svg>
<div class="u st" style="left:178px;top:1029px">edheltzel/flightdeck-for-jekyll#143 can be merged</div>
<div class="u st" style="left:479px;top:1029px">-- NORMAL --</div>
<div class="u st" style="left:1425px;top:1029px;letter-spacing:0">{ }</div>
<svg style="left:1433px;top:1040px" width="7" height="7" fill="none" stroke="#5b6468" stroke-width=".8"><circle cx="3.500" cy="3.500" r="2.800"/><path d="M2 2l3 3M5 2 2 5"/></svg>
<svg style="left:1452px;top:1032px" width="16" height="15" fill="none" stroke="#3f4547" stroke-width="1.300"><path d="M3 6.500V4c0-1.500 1.500-2.500 3-2.500S8 3 8 4.500C8 3 9 1.500 10.500 1.500S13 2.500 13 4v2.500l1.500 1.500v3c-2 2-4.500 3-6.500 3s-4.500-1-6.500-3V8z"/><path d="M6 8v2M10 8v2"/></svg>
<div class="u st" style="left:1483px;top:1029px">Formatting:</div>
<svg style="left:1553px;top:1035px" width="12" height="10" fill="none" stroke="#5b6468" stroke-width="1"><path d="M1 5l3.500 3.500L11 1"/></svg>

</div></body></html>
